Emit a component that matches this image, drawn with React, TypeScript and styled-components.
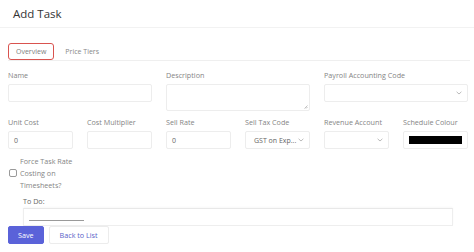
import React from "react";
import styled, { createGlobalStyle } from "styled-components";

const Global = createGlobalStyle`
  * { box-sizing: border-box; }
  body {
    margin: 0;
    background: #ffffff;
    font-family: "Open Sans", "Noto Sans", sans-serif;
    color: #555;
  }
`;

const Page = styled.div`
  width: 474px;
  height: 252px;
  overflow: hidden;
  background: #fff;
`;

const Header = styled.div`
  height: 28px;
  padding: 0 13px;
  display: flex;
  align-items: center;
  border-bottom: 1px solid #f2f2f2;
`;

const Title = styled.h1`
  margin: 0;
  font-size: 11.5px;
  font-weight: 500;
  color: #333;
`;

const Body = styled.div`
  padding: 14px 6px 0 8px;
`;

const TabBar = styled.div`
  display: flex;
  align-items: center;
  gap: 3px;
  height: 19px;
  border-bottom: 1px solid #efefef;
  margin-right: -2px;
`;

const Tab = styled.button<{ $active?: boolean }>`
  height: 17px;
  padding: 0 7px;
  font-family: inherit;
  font-size: 7px;
  color: ${(p) => (p.$active ? "#808080" : "#888")};
  background: #fff;
  border: 1px solid ${(p) => (p.$active ? "#d9534f" : "transparent")};
  border-radius: 3px;
  cursor: pointer;
`;

const Grid = styled.div`
  display: grid;
  grid-template-columns: repeat(6, 1fr);
  column-gap: 14px;
  row-gap: 6px;
  margin-top: 9px;
  align-items: start;
`;

const Field = styled.div<{ $span?: number }>`
  grid-column: span ${(p) => p.$span ?? 1};
  display: flex;
  flex-direction: column;
`;

const Label = styled.label`
  font-size: 7.2px;
  line-height: 10px;
  color: #858585;
  margin-bottom: 4px;
  white-space: nowrap;
`;

const Input = styled.div`
  height: 18px;
  border: 1px solid #ededed;
  border-radius: 2px;
  background: #fff;
  display: flex;
  align-items: center;
  padding: 0 5px;
  font-size: 7px;
  color: #666;
  position: relative;
`;

const TextArea = styled(Input)`
  height: 27px;
`;

const Grip = styled.svg`
  position: absolute;
  right: 1px;
  bottom: 1px;
`;

const Select = styled(Input)`
  justify-content: space-between;
  padding: 0 5px 0 8px;
`;

const ColourSwatch = styled.div`
  flex: 1;
  height: 8px;
  background: #000;
`;

const CheckRow = styled.div`
  grid-column: span 1;
  display: flex;
  align-items: center;
  gap: 3px;
  padding-left: 1px;
`;

const CheckBox = styled.span`
  flex: none;
  width: 8px;
  height: 8px;
  border: 1px solid #999;
  border-radius: 2px;
`;

const CheckText = styled.span`
  font-size: 7.2px;
  line-height: 12px;
  color: #858585;
`;

const TodoBlock = styled.div`
  margin: 5px 15px 0 15px;
`;

const TodoLabel = styled.div`
  font-size: 7.2px;
  line-height: 10px;
  color: #666;
  margin-bottom: 2px;
`;

const Editor = styled.div`
  height: 18px;
  border: 1px solid #eeeeee;
  border-top-color: #e8e8e8;
  box-shadow: 0 -1px 2px rgba(0, 0, 0, 0.03);
  padding: 0 5px;
  display: flex;
  align-items: center;
`;

const EditorLine = styled.div`
  width: 55px;
  height: 1px;
  background: #9a9a9a;
  margin-top: 6px;
`;

const Actions = styled.div`
  display: flex;
  gap: 5px;
`;

const Button = styled.button<{ $primary?: boolean }>`
  height: 18px;
  padding: 0 ${(p) => (p.$primary ? "9px" : "10px")};
  font-family: inherit;
  font-size: 7.2px;
  border-radius: 2px;
  border: 1px solid ${(p) => (p.$primary ? "#5a62d9" : "#ececec")};
  background: ${(p) => (p.$primary ? "#5a62d9" : "#fff")};
  color: ${(p) => (p.$primary ? "#fff" : "#5a5fc8")};
  cursor: pointer;
`;

const Chevron = () => (
  <svg width="6" height="4" viewBox="0 0 6 4">
    <path d="M0.6 0.8 L3 3 L5.4 0.8" fill="none" stroke="#aaa" strokeWidth="0.8" />
  </svg>
);

export default function App() {
  return (
    <Page>
      <Global />
      <Header>
        <Title>Add Task</Title>
      </Header>
      <Body>
        <TabBar>
          <Tab $active>Overview</Tab>
          <Tab>Price Tiers</Tab>
        </TabBar>
        <Grid>
          <Field $span={2}>
            <Label>Name</Label>
            <Input />
          </Field>
          <Field $span={2}>
            <Label>Description</Label>
            <TextArea>
              <Grip width="4" height="4" viewBox="0 0 4 4">
                <path d="M3.5 0.5 L0.5 3.5 M3.5 2 L2 3.5" stroke="#999" strokeWidth="0.6" />
              </Grip>
            </TextArea>
          </Field>
          <Field $span={2}>
            <Label>Payroll Accounting Code</Label>
            <Select>
              <span />
              <Chevron />
            </Select>
          </Field>
          <Field>
            <Label>Unit Cost</Label>
            <Input>0</Input>
          </Field>
          <Field>
            <Label>Cost Multiplier</Label>
            <Input />
          </Field>
          <Field>
            <Label>Sell Rate</Label>
            <Input>0</Input>
          </Field>
          <Field>
            <Label>Sell Tax Code</Label>
            <Select>
              <span>GST on Exp...</span>
              <Chevron />
            </Select>
          </Field>
          <Field>
            <Label>Revenue Account</Label>
            <Select>
              <span />
              <Chevron />
            </Select>
          </Field>
          <Field>
            <Label>Schedule Colour</Label>
            <Input>
              <ColourSwatch />
            </Input>
          </Field>
          <CheckRow>
            <CheckBox />
            <CheckText>Force Task Rate Costing on Timesheets?</CheckText>
          </CheckRow>
        </Grid>
        <TodoBlock>
          <TodoLabel>To Do:</TodoLabel>
          <Editor>
            <EditorLine />
          </Editor>
        </TodoBlock>
        <Actions>
          <Button $primary>Save</Button>
          <Button>Back to List</Button>
        </Actions>
      </Body>
    </Page>
  );
}
